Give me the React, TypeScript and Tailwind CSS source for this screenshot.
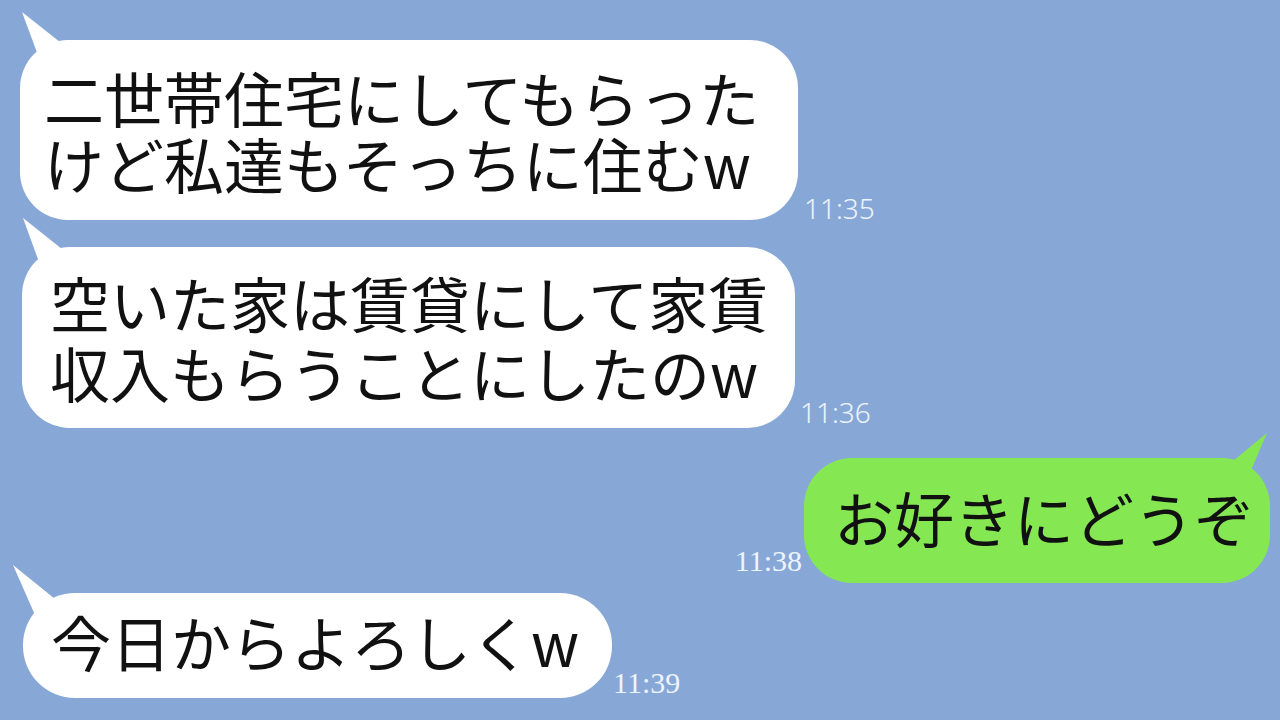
const jp = "font-['Noto_Sans_CJK_JP','Noto_Sans_CJK_SC',sans-serif]";

function LeftTail({ points }: { points: string }) {
  return (
    <svg
      className="absolute -left-[12px] -top-[30px] h-[60px] w-[70px]"
      viewBox="0 0 70 60"
    >
      <polygon points={points} fill="#ffffff" />
    </svg>
  );
}

function RightTail() {
  return (
    <svg
      className="absolute right-0 -top-[30px] h-[60px] w-[60px]"
      viewBox="0 0 60 60"
    >
      <polygon points="57,5 12,42 20,58 35,56" fill="#85e853" />
    </svg>
  );
}

export default function App() {
  return (
    <div className="flex h-[720px] w-[1280px] flex-col overflow-hidden bg-[#87a8d7] pt-[40px]">
      {/* 11:35 */}
      <div className="flex items-end pl-[20px]">
        <div
          className={`relative w-[778px] rounded-[48px] bg-white pl-[24px] pt-[24px] pb-[24px] text-[60px] whitespace-nowrap text-[#111] ${jp}`}
        >
          <LeftTail points="14,2 34,56 72,56 62,40" />
          <div className="relative h-[66px] leading-[66px]">二世帯住宅にしてもらった</div>
          <div className="relative h-[66px] leading-[66px]">けど私達もそっちに住むw</div>
        </div>
        <span className="mb-[-2px] ml-[6px] font-['Noto_Sans','Liberation_Sans',sans-serif] text-[28px] leading-none font-light text-[#eef4fb]">
          11:35
        </span>
      </div>

      {/* 11:36 */}
      <div className="mt-[27px] flex items-end pl-[22px]">
        <div
          className={`relative w-[773px] rounded-[48px] bg-white pl-[28px] pt-[20px] pb-[21px] text-[60px] whitespace-nowrap text-[#111] ${jp}`}
        >
          <LeftTail points="13,1 33,56 72,56 62,40" />
          <div className="relative h-[70px] leading-[70px]">空いた家は賃貸にして家賃</div>
          <div className="relative h-[70px] leading-[70px]">収入もらうことにしたのw</div>
        </div>
        <span className="mb-[2px] ml-[5px] font-['Noto_Sans','Liberation_Sans',sans-serif] text-[28px] leading-none font-light text-[#eef4fb]">
          11:36
        </span>
      </div>

      {/* 11:38 */}
      <div className="mt-[30px] flex items-end justify-end pr-[10px]">
        <span className="mr-[2px] mb-[7px] font-['Liberation_Serif',serif] text-[30px] leading-none text-[#eef4fb]">
          11:38
        </span>
        <div
          className={`relative w-[466px] rounded-[48px] bg-[#85e853] pl-[30px] pt-[26px] pb-[33px] text-[60px] whitespace-nowrap text-[#111] ${jp}`}
        >
          <RightTail />
          <div className="relative h-[66px] leading-[66px]">お好きにどうぞ</div>
        </div>
      </div>

      {/* 11:39 */}
      <div className="mt-[10px] flex items-end pl-[23px]">
        <div
          className={`relative w-[589px] rounded-[52px] bg-white pl-[28px] pt-[15px] pb-[24px] text-[60px] whitespace-nowrap text-[#111] ${jp}`}
        >
          <LeftTail points="2,2 24,52 62,56 44,36" />
          <div className="relative h-[66px] leading-[66px]">今日からよろしくw</div>
        </div>
        <span className="ml-[1px] font-['Liberation_Serif',serif] text-[30px] leading-none text-[#eef4fb]">
          11:39
        </span>
      </div>
    </div>
  );
}
